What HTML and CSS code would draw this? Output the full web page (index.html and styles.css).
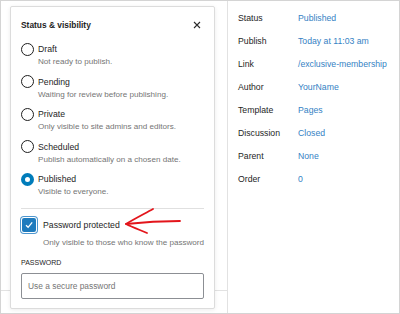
FILE: index.html
```html
<!DOCTYPE html>
<html lang="en">
<head>
    <meta charset="UTF-8">
    <meta name="viewport" content="width=device-width, initial-scale=1.0">
    <title>Status &amp; visibility</title>
    <link rel="stylesheet" href="styles.css">
</head>
<body>
    <div class="frame">
        <div class="editor-area">
            <div class="area-footer"></div>

            <div class="popover">
                <div class="popover-header">
                    <h2>Status &amp; visibility</h2>
                    <span class="close">
                        <svg width="8" height="8" viewBox="0 0 8 8">
                            <path d="M1 1 L7 7 M7 1 L1 7" stroke="#2c2c2c" stroke-width="1.1" fill="none"/>
                        </svg>
                    </span>
                </div>

                <div class="options">
                    <div class="option">
                        <div class="option-label"><span class="radio"></span>Draft</div>
                        <div class="option-desc">Not ready to publish.</div>
                    </div>
                    <div class="option">
                        <div class="option-label"><span class="radio"></span>Pending</div>
                        <div class="option-desc">Waiting for review before publishing.</div>
                    </div>
                    <div class="option">
                        <div class="option-label"><span class="radio"></span>Private</div>
                        <div class="option-desc">Only visible to site admins and editors.</div>
                    </div>
                    <div class="option">
                        <div class="option-label"><span class="radio"></span>Scheduled</div>
                        <div class="option-desc">Publish automatically on a chosen date.</div>
                    </div>
                    <div class="option">
                        <div class="option-label"><span class="radio checked"></span>Published</div>
                        <div class="option-desc">Visible to everyone.</div>
                    </div>
                </div>

                <div class="divider"></div>

                <div class="check-row">
                    <span class="checkbox">
                        <svg width="10" height="10" viewBox="0 0 10 10">
                            <path d="M2 5.3 L4.1 7.3 L8.2 2.4" stroke="#fff" stroke-width="1.3" fill="none"/>
                        </svg>
                    </span>
                    Password protected
                </div>
                <div class="check-desc">Only visible to those who know the password</div>

                <div class="field-label">PASSWORD</div>
                <div class="field-input">Use a secure password</div>

                <svg class="annotation" width="70" height="34" viewBox="0 0 70 34">
                    <path d="M2 16 C 20 14, 40 13, 56 13" stroke="#e3151b" stroke-width="1.8" fill="none" stroke-linecap="round"/>
                    <path d="M29 1 C 20 6, 10 11, 2 16 C 8 19, 16 22, 23 25" stroke="#e3151b" stroke-width="1.8" fill="none" stroke-linecap="round" stroke-linejoin="round"/>
                </svg>
            </div>
        </div>

        <div class="summary">
            <div class="summary-row"><span class="summary-label">Status</span><span class="summary-value">Published</span></div>
            <div class="summary-row"><span class="summary-label">Publish</span><span class="summary-value">Today at 11:03 am</span></div>
            <div class="summary-row"><span class="summary-label">Link</span><span class="summary-value">/exclusive-membership</span></div>
            <div class="summary-row"><span class="summary-label">Author</span><span class="summary-value">YourName</span></div>
            <div class="summary-row"><span class="summary-label">Template</span><span class="summary-value">Pages</span></div>
            <div class="summary-row"><span class="summary-label">Discussion</span><span class="summary-value">Closed</span></div>
            <div class="summary-row"><span class="summary-label">Parent</span><span class="summary-value">None</span></div>
            <div class="summary-row"><span class="summary-label">Order</span><span class="summary-value">0</span></div>
        </div>
    </div>
</body>
</html>
```

FILE: styles.css
```css
body {
    margin: 0;
    padding: 0;
    background-color: #fff;
    font-family: "Liberation Sans", Arial, sans-serif;
    color: #1e1e1e;
}

.frame {
    width: 400px;
    height: 314px;
    box-sizing: border-box;
    border: 1px solid #d4d4d4;
    display: flex;
}

.editor-area {
    position: relative;
    width: 227px;
    box-sizing: border-box;
    border-right: 1px solid #e2e2e2;
    display: flex;
    flex-direction: column;
}

.area-footer {
    margin-top: auto;
    height: 23px;
    box-sizing: border-box;
    border-top: 1px solid #e2e2e2;
}

.popover {
    position: absolute;
    left: 9px;
    top: 5px;
    width: 205px;
    height: 303px;
    box-sizing: border-box;
    background-color: #fff;
    border: 1px solid #dcdcdc;
    border-radius: 2px;
    box-shadow: 0 1px 4px rgba(0, 0, 0, 0.08);
    padding: 8px 10px 10px 10px;
}

.popover-header {
    display: flex;
    justify-content: space-between;
    align-items: center;
    height: 20px;
}

.popover-header h2 {
    margin: 0;
    font-size: 8.4px;
    font-weight: bold;
}

.close {
    display: flex;
    margin-right: 3px;
}

.options {
    display: flex;
    flex-direction: column;
    gap: 6.5px;
    margin-top: 7px;
}

.option-label {
    display: flex;
    align-items: center;
    height: 14px;
    font-size: 8.7px;
}

.radio {
    width: 13px;
    height: 13px;
    box-sizing: border-box;
    border: 1px solid #1e1e1e;
    border-radius: 50%;
    margin-right: 4px;
}

.radio.checked {
    border: 4px solid #007cba;
    background-color: #fff;
}

.option-desc {
    height: 12px;
    line-height: 12px;
    font-size: 8.1px;
    color: #757575;
    padding-left: 17px;
    white-space: nowrap;
}

.divider {
    margin-top: 10px;
    border-top: 1px solid #e0e0e0;
}

.check-row {
    display: flex;
    align-items: center;
    height: 16px;
    margin-top: 8px;
    font-size: 8.7px;
}

.checkbox {
    display: flex;
    align-items: center;
    justify-content: center;
    width: 14px;
    height: 14px;
    margin-left: 1px;
    margin-right: 7px;
    border-radius: 2px;
    background-color: #1f7bbd;
    box-shadow: 0 0 0 1px #fff, 0 0 0 2px #4d96cf;
}

.check-desc {
    margin-top: 4px;
    height: 12px;
    line-height: 12px;
    padding-left: 22px;
    font-size: 8.1px;
    color: #757575;
    white-space: nowrap;
}

.field-label {
    margin-top: 9px;
    height: 10px;
    line-height: 10px;
    font-size: 7px;
    color: #1e1e1e;
}

.field-input {
    margin-top: 5px;
    height: 26px;
    box-sizing: border-box;
    border: 1px solid #8c8f94;
    border-radius: 2px;
    padding: 0 6px;
    display: flex;
    align-items: center;
    font-size: 8.4px;
    color: #757575;
}

.annotation {
    position: absolute;
    left: 113px;
    top: 201px;
}

.summary {
    flex: 1;
    padding: 5px 0 0 10px;
}

.summary-row {
    display: flex;
    align-items: center;
    height: 23px;
    font-size: 8.7px;
}

.summary-label {
    width: 60px;
}

.summary-value {
    color: #3582c4;
}
```
